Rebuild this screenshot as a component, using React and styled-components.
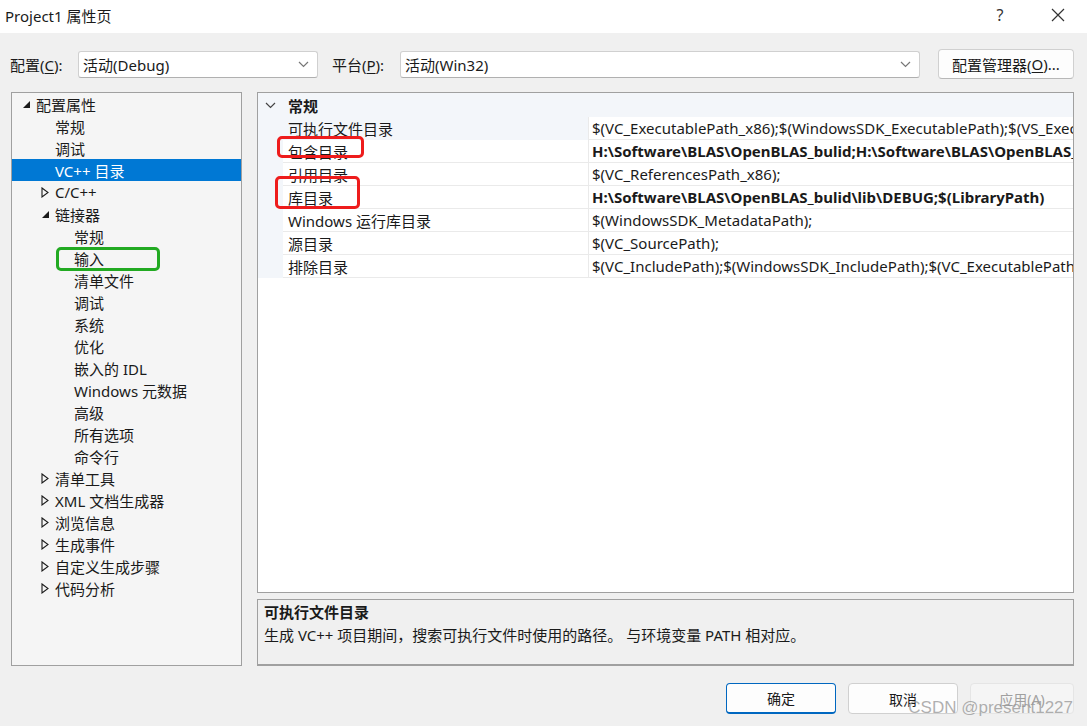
import styled, { createGlobalStyle } from 'styled-components';

const GlobalStyle = createGlobalStyle`
  html, body {
    margin: 0;
    padding: 0;
    background: #f0f0f0;
  }
  body {
    font-family: "Noto Sans", "Noto Sans CJK SC", sans-serif;
    font-size: 15px;
    color: #1a1a1a;
  }
`;

const treeItems = [
  { label: '配置属性', level: 0, arrow: 'open' },
  { label: '常规', level: 1 },
  { label: '调试', level: 1 },
  { label: 'VC++ 目录', level: 1, selected: true },
  { label: 'C/C++', level: 1, arrow: 'closed' },
  { label: '链接器', level: 1, arrow: 'open' },
  { label: '常规', level: 2 },
  { label: '输入', level: 2 },
  { label: '清单文件', level: 2 },
  { label: '调试', level: 2 },
  { label: '系统', level: 2 },
  { label: '优化', level: 2 },
  { label: '嵌入的 IDL', level: 2 },
  { label: 'Windows 元数据', level: 2 },
  { label: '高级', level: 2 },
  { label: '所有选项', level: 2 },
  { label: '命令行', level: 2 },
  { label: '清单工具', level: 1, arrow: 'closed' },
  { label: 'XML 文档生成器', level: 1, arrow: 'closed' },
  { label: '浏览信息', level: 1, arrow: 'closed' },
  { label: '生成事件', level: 1, arrow: 'closed' },
  { label: '自定义生成步骤', level: 1, arrow: 'closed' },
  { label: '代码分析', level: 1, arrow: 'closed' },
];

const properties = [
  { name: '可执行文件目录', value: '$(VC_ExecutablePath_x86);$(WindowsSDK_ExecutablePath);$(VS_ExecutablePath);$(MSBuild_ExecutablePath)', current: true },
  { name: '包含目录', value: 'H:\\Software\\BLAS\\OpenBLAS_bulid;H:\\Software\\BLAS\\OpenBLAS_bulid\\include;$(IncludePath)', bold: true },
  { name: '引用目录', value: '$(VC_ReferencesPath_x86);' },
  { name: '库目录', value: 'H:\\Software\\BLAS\\OpenBLAS_bulid\\lib\\DEBUG;$(LibraryPath)', bold: true },
  { name: 'Windows 运行库目录', value: '$(WindowsSDK_MetadataPath);' },
  { name: '源目录', value: '$(VC_SourcePath);' },
  { name: '排除目录', value: '$(VC_IncludePath);$(WindowsSDK_IncludePath);$(VC_ExecutablePath_x86);' },
];

const Window = styled.div`
  position: relative;
  width: 1087px;
  height: 726px;
  display: flex;
  flex-direction: column;
  background: #f0f0f0;
  overflow: hidden;
`;

const TitleBar = styled.div`
  height: 33px;
  background: #ffffff;
  display: flex;
  align-items: center;
  padding-left: 5px;
  padding-bottom: 3px;
  box-sizing: border-box;
`;

const Title = styled.div`
  flex: 1;
  font-size: 15px;
  color: #1a1a1a;
`;

const TitleButton = styled.div`
  width: 58px;
  display: flex;
  justify-content: center;
  align-items: center;
  color: #333;
  font-size: 16px;
`;

const Body = styled.div`
  flex: 1;
  display: flex;
  flex-direction: column;
  padding: 0 13px 0 11px;
  min-width: 0;
`;

const ConfigRow = styled.div`
  display: flex;
  align-items: center;
  height: 28px;
  margin: 17px 0 14px;
`;

const Label = styled.span`
  margin-left: ${(p) => p.$offset}px;
  width: ${(p) => p.$width}px;
  flex-shrink: 0;
  white-space: nowrap;
  & u {
    text-decoration: underline;
    text-underline-offset: 2px;
  }
`;

const Select = styled.div`
  width: ${(p) => p.$width}px;
  flex-shrink: 0;
  height: 27px;
  box-sizing: border-box;
  background: #ffffff;
  border: 1px solid #d0d0d0;
  border-bottom-color: #b0b0b0;
  border-radius: 3px;
  display: flex;
  align-items: center;
  padding: 0 8px 0 4px;
`;

const SelectText = styled.span`
  flex: 1;
`;

const ManagerButton = styled.div`
  margin-left: auto;
  width: 136px;
  height: 30px;
  box-sizing: border-box;
  background: #fdfdfd;
  border: 1px solid #d0d0d0;
  border-bottom-color: #b8b8b8;
  border-radius: 4px;
  display: flex;
  align-items: center;
  justify-content: center;
  & u {
    text-underline-offset: 2px;
  }
`;

const Main = styled.div`
  display: flex;
  gap: 15px;
  height: 574px;
`;

const Tree = styled.div`
  width: 231px;
  flex-shrink: 0;
  box-sizing: border-box;
  background: #f5f5f5;
  border: 1px solid #a0a0a0;
  overflow: hidden;
`;

const TreeRow = styled.div`
  height: 22px;
  display: flex;
  align-items: center;
  padding-left: ${(p) => 10 + p.$level * 19}px;
  background: ${(p) => (p.$selected ? '#0078d4' : 'transparent')};
  color: ${(p) => (p.$selected ? '#ffffff' : '#1a1a1a')};
  white-space: nowrap;
`;

const Arrow = styled.span`
  width: 14px;
  height: 22px;
  flex-shrink: 0;
  display: flex;
  align-items: center;
  visibility: ${(p) => (p.$none ? 'hidden' : 'visible')};
`;

const Right = styled.div`
  flex: 1;
  min-width: 0;
  display: flex;
  flex-direction: column;
  gap: 6px;
`;

const Grid = styled.div`
  height: 501px;
  box-sizing: border-box;
  background: #ffffff;
  border: 1px solid #a0a0a0;
  overflow: hidden;
`;

const GroupHeader = styled.div`
  height: 24px;
  display: flex;
  align-items: center;
  background: #f3f6fa;
  font-weight: 700;
`;

const GroupName = styled.span`
  padding-left: 5px;
`;

const Gutter = styled.div`
  width: 25px;
  align-self: stretch;
  display: flex;
  align-items: center;
  justify-content: center;
  background: #f3f6fa;
  flex-shrink: 0;
`;

const PropRow = styled.div`
  height: 23px;
  display: flex;
`;

const NameCell = styled.div`
  width: 305px;
  flex-shrink: 0;
  box-sizing: border-box;
  padding-left: 5px;
  display: flex;
  align-items: center;
  background: ${(p) => (p.$current ? '#f3f6fa' : '#ffffff')};
  border-bottom: 1px solid ${(p) => (p.$current ? '#f3f6fa' : '#eaeaea')};
  white-space: nowrap;
`;

const ValueCell = styled.div`
  flex: 1;
  min-width: 0;
  box-sizing: border-box;
  padding-left: 3px;
  display: flex;
  align-items: center;
  border-left: 1px solid #eaeaea;
  border-bottom: 1px solid #eaeaea;
  font-weight: ${(p) => (p.$bold ? 700 : 400)};
  white-space: nowrap;
  overflow: hidden;
`;

const Description = styled.div`
  flex: 1;
  box-sizing: border-box;
  background: #f0f0f0;
  border: 1px solid #a0a0a0;
  border-bottom: 2px solid #a0a0a0;
  padding: 1px 6px;
`;

const DescTitle = styled.div`
  font-weight: 700;
  line-height: 22px;
`;

const DescText = styled.div`
  line-height: 24px;
`;

const Footer = styled.div`
  display: flex;
  justify-content: flex-end;
  gap: 12px;
  padding-top: 17px;
`;

const Button = styled.div`
  width: ${(p) => p.$width}px;
  height: 31px;
  box-sizing: border-box;
  border-radius: 4px;
  background: ${(p) => (p.$disabled ? '#f5f5f5' : '#fdfdfd')};
  border: 1px solid ${(p) => (p.$primary ? '#0067c0' : p.$disabled ? '#e5e5e5' : '#d0d0d0')};
  border-bottom-width: ${(p) => (p.$primary ? 2 : 1)}px;
  color: ${(p) => (p.$disabled ? '#a0a0a0' : '#1a1a1a')};
  display: flex;
  align-items: center;
  justify-content: center;
  font-size: 14px;
`;

const Mark = styled.div`
  position: absolute;
  left: ${(p) => p.$x}px;
  top: ${(p) => p.$y}px;
  width: ${(p) => p.$w}px;
  height: ${(p) => p.$h}px;
  border: 3px solid ${(p) => p.$color};
  border-radius: 5px;
  box-sizing: border-box;
  pointer-events: none;
`;

const Watermark = styled.div`
  position: absolute;
  right: 14px;
  bottom: 8px;
  font-family: "Liberation Sans", Arial, sans-serif;
  font-size: 17px;
  color: rgba(150, 150, 150, 0.75);
  pointer-events: none;
`;

const Chevron = ({ color = '#555' }) => (
  <svg width="11" height="7" viewBox="0 0 11 7">
    <path d="M1 1l4.5 4.5L10 1" fill="none" stroke={color} strokeWidth="1.2" />
  </svg>
);

const TreeArrow = ({ type, color }) =>
  type === 'open' ? (
    <svg width="9" height="9" viewBox="0 0 9 9">
      <path d="M8 1v7H1z" fill={color} />
    </svg>
  ) : (
    <svg width="8" height="11" viewBox="0 0 8 11">
      <path d="M1 1l6 4.5L1 10z" fill="none" stroke={color} strokeWidth="1.1" />
    </svg>
  );

const App = () => (
  <>
    <GlobalStyle />
    <Window>
      <TitleBar>
        <Title>Project1 属性页</Title>
        <TitleButton>?</TitleButton>
        <TitleButton>
          <svg width="14" height="14" viewBox="0 0 14 14">
            <path d="M1 1l12 12M13 1L1 13" stroke="#333" strokeWidth="1.2" />
          </svg>
        </TitleButton>
      </TitleBar>
      <Body>
        <ConfigRow>
          <Label $offset={-1} $width={68}>
            配置(<u>C</u>):
          </Label>
          <Select $width={240}>
            <SelectText>活动(Debug)</SelectText>
            <Chevron color="#777" />
          </Select>
          <Label $offset={14} $width={68}>
            平台(<u>P</u>):
          </Label>
          <Select $width={520}>
            <SelectText>活动(Win32)</SelectText>
            <Chevron color="#777" />
          </Select>
          <ManagerButton>
            配置管理器(<u>O</u>)...
          </ManagerButton>
        </ConfigRow>
        <Main>
          <Tree>
            {treeItems.map((item, i) => {
              const color = item.selected ? '#ffffff' : '#1a1a1a';
              return (
                <TreeRow key={i} $level={item.level} $selected={item.selected}>
                  <Arrow $none={!item.arrow}>
                    {item.arrow && <TreeArrow type={item.arrow} color={color} />}
                  </Arrow>
                  {item.label}
                </TreeRow>
              );
            })}
          </Tree>
          <Right>
            <Grid>
              <GroupHeader>
                <Gutter>
                  <Chevron color="#444" />
                </Gutter>
                <GroupName>常规</GroupName>
              </GroupHeader>
              {properties.map((p) => (
                <PropRow key={p.name}>
                  <Gutter />
                  <NameCell $current={p.current}>{p.name}</NameCell>
                  <ValueCell $bold={p.bold}>{p.value}</ValueCell>
                </PropRow>
              ))}
            </Grid>
            <Description>
              <DescTitle>可执行文件目录</DescTitle>
              <DescText>生成 VC++ 项目期间，搜索可执行文件时使用的路径。 与环境变量 PATH 相对应。</DescText>
            </Description>
          </Right>
        </Main>
        <Footer>
          <Button $width={110} $primary>
            确定
          </Button>
          <Button $width={110}>取消</Button>
          <Button $width={104} $disabled>
            应用(A)
          </Button>
        </Footer>
      </Body>
      <Mark $x={277} $y={136} $w={87} $h={22} $color="#ee1c1c" />
      <Mark $x={275} $y={176} $w={85} $h={33} $color="#ee1c1c" />
      <Mark $x={56} $y={247} $w={104} $h={24} $color="#22aa22" />
      <Watermark>CSDN @present1227</Watermark>
    </Window>
  </>
);

export default App;
